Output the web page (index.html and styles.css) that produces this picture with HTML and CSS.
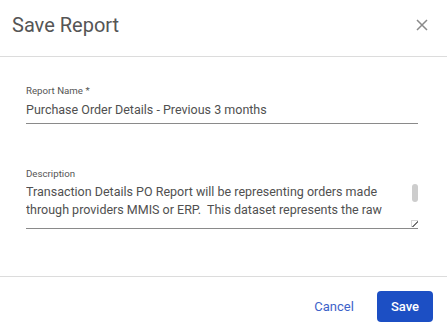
FILE: index.html
```html
<!DOCTYPE html>
<html lang="en">
<head>
  <meta charset="UTF-8">
  <meta name="viewport" content="width=device-width, initial-scale=1.0">
  <title>Save Report</title>
  <link rel="stylesheet" href="styles.css">
</head>
<body>
  <div class="dialog">
    <div class="dialog_head">
      <h1 class="title">Save Report</h1>
      <button class="close" type="button" aria-label="Close">
        <svg width="12" height="12" viewBox="0 0 12 12"><path d="M1 1L11 11M11 1L1 11" stroke="#8a8a8a" stroke-width="1.5" fill="none"/></svg>
      </button>
    </div>

    <div class="dialog_body">
      <label class="field">
        <span class="label">Report Name *</span>
        <input class="input" type="text" value="Purchase Order Details - Previous 3 months">
      </label>
      <label class="field field_desc">
        <span class="label">Description</span>
        <span class="textarea_wrap">
          <textarea class="textarea" rows="2">Transaction Details PO Report will be representing orders made through providers MMIS or ERP.  This dataset represents the raw data pulled from purchase order lines, including vendor, item and quantity information for the selected facilities.</textarea>
          <span class="thumb"></span>
          <span class="resizer"></span>
        </span>
      </label>
    </div>

    <div class="dialog_foot">
      <button class="btn btn_text" type="button">Cancel</button>
      <button class="btn btn_primary" type="button">Save</button>
    </div>
  </div>
</body>
</html>
```

FILE: styles.css
```css
body {
  margin: 0;
  background: #fff;
  font-family: Roboto, 'Liberation Sans', sans-serif;
}

.dialog {
  width: 447px;
  height: 334px;
  background: #fff;
}

.dialog_head {
  display: flex;
  align-items: center;
  justify-content: space-between;
  height: 50px;
  padding: 0 19px 6px 12px;
  border-bottom: 1px solid #dcdcdc;
}
.dialog_head .title {
  margin: 0;
  font-size: 20px;
  font-weight: 400;
  line-height: 24px;
  color: #555;
}
.dialog_head .close {
  display: flex;
  padding: 0;
  border: 0;
  background: none;
  cursor: pointer;
}

.dialog_body {
  padding: 28px 29px 0 26px;
  height: 191px;
}

.field {
  display: flex;
  flex-direction: column;
}
.field_desc {margin-top: 44px;}

.field .label {
  font-size: 9.7px;
  line-height: 12px;
  color: #555;
}
.field .input,
.field .textarea {
  font-family: Roboto, 'Liberation Sans', sans-serif;
  font-size: 12.5px;
  line-height: 18px;
  color: #505050;
  outline: none;
  background: none;
}
.field .input {
  margin-top: 4px;
  padding: 0 0 4px;
  border: 0;
  border-bottom: 1px solid #8a8a8a;
}

.textarea_wrap {
  position: relative;
  display: flex;
  flex-direction: column;
  margin-top: 3px;
  padding-bottom: 8px;
  border-bottom: 1px solid #8a8a8a;
}
.field .textarea {
  margin: 0;
  height: 37px;
  padding: 0 22px 1px 0;
  border: 0;
  box-sizing: border-box;
  resize: none;
  overflow: hidden;
}
.textarea_wrap .thumb {
  position: absolute;
  top: 1px;
  right: 0;
  width: 6px;
  height: 18px;
  border-radius: 3px;
  background: #cdcdcd;
}
.textarea_wrap .resizer {
  position: absolute;
  right: 0;
  bottom: 1px;
  width: 6px;
  height: 6px;
  border: 1px solid #d6d6d6;
  border-right: 0;
  border-bottom: 0;
  background: linear-gradient(135deg, transparent 45%, #777 45%, #777 60%, transparent 60%);
}

.dialog_foot {
  display: flex;
  justify-content: flex-end;
  align-items: center;
  gap: 12px;
  padding: 14px 14px 12px;
  border-top: 1px solid #dcdcdc;
}

.btn {
  height: 31px;
  border: 0;
  border-radius: 4px;
  font-family: Roboto, 'Liberation Sans', sans-serif;
  font-size: 13px;
  cursor: pointer;
}
.btn_text {
  padding: 0 11px;
  background: none;
  color: #3d62c9;
}
.btn_primary {
  padding: 0 14px;
  background: #1c4fc4;
  color: #fff;
  font-weight: 500;
}
```
